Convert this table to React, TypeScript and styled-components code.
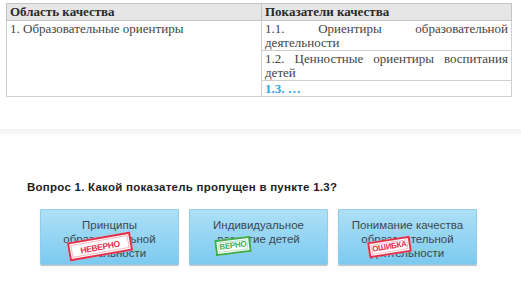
import styled, { createGlobalStyle } from 'styled-components';

const GlobalStyle = createGlobalStyle`
  html, body {
    margin: 0;
    padding: 0;
    background: #ffffff;
  }
`;

type StampKind = 'wrong' | 'right' | 'error';

type Answer = {
  lines: string[];
  stamp: StampKind;
};

const answers: Answer[] = [
  { lines: ['Принципы', 'образовательной', 'деятельности'], stamp: 'wrong' },
  { lines: ['Индивидуальное', 'развитие детей'], stamp: 'right' },
  { lines: ['Понимание качества', 'образовательной', 'деятельности'], stamp: 'error' },
];

const stampText = { wrong: 'НЕВЕРНО', right: 'ВЕРНО', error: 'ОШИБКА' };

const App = () => {
  return (
    <Page>
      <GlobalStyle />
      <Table>
        <colgroup>
          <col style={{ width: 255 }} />
          <col style={{ width: 250 }} />
        </colgroup>
        <thead>
          <tr>
            <HeadCell>Область качества</HeadCell>
            <HeadCell>Показатели качества</HeadCell>
          </tr>
        </thead>
        <tbody>
          <tr>
            <Cell rowSpan={3}>1. Образовательные ориентиры</Cell>
            <Cell $justify>1.1. Ориентиры образовательной деятельности</Cell>
          </tr>
          <tr>
            <Cell $justify>1.2. Ценностные ориентиры воспитания детей</Cell>
          </tr>
          <tr>
            <Cell>
              <Missing>1.3. …</Missing>
            </Cell>
          </tr>
        </tbody>
      </Table>

      <Divider />

      <Quiz>
        <Question>Вопрос 1. Какой показатель пропущен в пункте 1.3?</Question>
        <Options>
          {answers.map(a => (
            <Option key={a.lines.join(' ')}>
              {a.lines.map(l => (
                <span key={l}>{l}</span>
              ))}
              <Stamp $kind={a.stamp}>{stampText[a.stamp]}</Stamp>
            </Option>
          ))}
        </Options>
      </Quiz>
    </Page>
  );
};

const Page = styled.div`
  width: 521px;
  height: 283px;
  overflow: hidden;
  padding-top: 3px;
  box-sizing: border-box;
`;

const Table = styled.table`
  margin-left: 6px;
  width: 505px;
  border-collapse: collapse;
  table-layout: fixed;
  font-family: 'Liberation Serif', 'DejaVu Serif', serif;
  font-size: 13px;
  color: #444444;
  border: 1px solid #c4c4c4;
`;

const HeadCell = styled.th`
  text-align: left;
  font-weight: bold;
  line-height: 16px;
  padding: 0 3px;
  background: #e6e6e6;
  color: #2a2a2a;
  border: 1px solid #c4c4c4;
`;

const Cell = styled.td<{ $justify?: boolean }>`
  vertical-align: top;
  line-height: 14px;
  padding: 1px 3px 0;
  text-align: ${({ $justify }) => ($justify ? 'justify' : 'left')};
  border: 1px solid #cfcfcf;
`;

const Missing = styled.span`
  color: #2aa6e2;
  font-weight: bold;
`;

const Divider = styled.div`
  margin-top: 32px;
  height: 8px;
  background: linear-gradient(#f1f1f1, #ffffff);
`;

const Quiz = styled.div`
  display: flex;
  flex-direction: column;
  padding: 44px 0 0 27px;
`;

const Question = styled.div`
  font-family: 'Liberation Sans', Arial, sans-serif;
  font-weight: bold;
  font-size: 11.5px;
  color: #1e1e1e;
  letter-spacing: 0.25px;
`;

const Options = styled.div`
  display: flex;
  gap: 10px;
  margin-top: 16px;
  padding-left: 13px;
`;

const Option = styled.div`
  position: relative;
  width: 139px;
  height: 56px;
  box-sizing: border-box;
  display: flex;
  flex-direction: column;
  align-items: center;
  padding-top: 8px;
  border: 1px solid #94cbe6;
  border-radius: 1px;
  background: linear-gradient(#ade0f6, #7ccaf0);
  box-shadow: 0 1px 1px rgba(0, 0, 0, 0.25);
  font-family: 'Liberation Sans', Arial, sans-serif;
  font-size: 11.5px;
  line-height: 14px;
  color: #3c4650;
`;

const stampColor = { wrong: '#e2304a', right: '#3fae4f', error: '#e2304a' };
const stampPlace = {
  wrong: { left: 27, top: 27, width: 64, height: 19, rot: -10, size: 8.5 },
  right: { left: 25, top: 28, width: 36, height: 16, rot: -7, size: 8 },
  error: { left: 29, top: 29, width: 43, height: 16, rot: -9, size: 8 },
};

const Stamp = styled.div<{ $kind: StampKind }>`
  position: absolute;
  left: ${({ $kind }) => stampPlace[$kind].left}px;
  top: ${({ $kind }) => stampPlace[$kind].top}px;
  width: ${({ $kind }) => stampPlace[$kind].width}px;
  height: ${({ $kind }) => stampPlace[$kind].height}px;
  box-sizing: border-box;
  display: flex;
  align-items: center;
  justify-content: center;
  transform: rotate(${({ $kind }) => stampPlace[$kind].rot}deg);
  background: #ffffff;
  border: 2px solid ${({ $kind }) => stampColor[$kind]};
  box-shadow: inset 0 0 0 1px #fff, inset 0 0 0 2px ${({ $kind }) => stampColor[$kind]}55;
  font-family: 'Liberation Sans', Arial, sans-serif;
  font-weight: bold;
  font-size: ${({ $kind }) => stampPlace[$kind].size}px;
  letter-spacing: -0.3px;
  white-space: nowrap;
  color: ${({ $kind }) => stampColor[$kind]};
`;

export default App;
